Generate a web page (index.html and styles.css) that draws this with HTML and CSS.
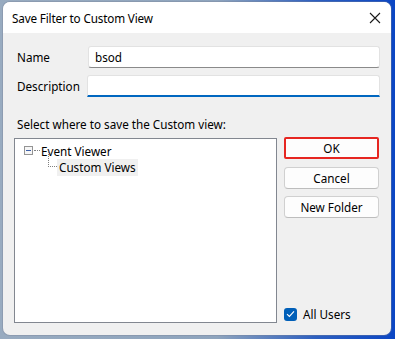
FILE: index.html
```html
<!DOCTYPE html>
<html>
<head>
<meta charset="utf-8">
<link rel="stylesheet" href="styles.css">
</head>
<body>
<div class="window">
  <div class="titlebar">
    <span class="title">Save Filter to Custom View</span>
    <svg class="close" width="12" height="12" viewBox="0 0 12 12"><path d="M1 1 L11 11 M11 1 L1 11" stroke="#1a1a1a" stroke-width="1.1" fill="none"/></svg>
  </div>
  <div class="content">
    <div class="fields">
      <label class="lbl">Name</label>
      <div class="input">bsod</div>
      <label class="lbl">Description</label>
      <div class="input focused"></div>
    </div>
    <div class="section-label">Select where to save the Custom view:</div>
    <div class="main">
      <div class="tree">
        <div class="node root">
          <span class="expander"><span class="minus"></span></span>
          <span class="hline"></span>
          <span class="node-text">Event Viewer</span>
        </div>
        <div class="node child">
          <span class="elbow"></span>
          <span class="node-text selected">Custom Views</span>
        </div>
      </div>
      <div class="side">
        <button class="btn ok">OK</button>
        <button class="btn">Cancel</button>
        <button class="btn">New Folder</button>
        <div class="spacer"></div>
        <div class="check">
          <span class="box"><svg width="9" height="8" viewBox="0 0 9 8"><path d="M1 4.2 L3.4 6.4 L8 1.4" stroke="#fff" stroke-width="1.1" fill="none"/></svg></span>
          <span>All Users</span>
        </div>
      </div>
    </div>
  </div>
</div>
</body>
</html>
```

FILE: styles.css
```css
* { box-sizing: border-box; }
html, body { margin: 0; padding: 0; }
body {
  width: 395px;
  height: 339px;
  overflow: hidden;
  background: linear-gradient(90deg, #98abc0 0%, #8ea4bd 55%, #2d5fc0 80%, #0b46c4 100%);
  font-family: "Segoe UI", "Noto Sans", "Open Sans", sans-serif;
  font-size: 11.7px;
  color: #000;
  padding: 2px 4px 0 3px;
}
.window {
  width: 388px;
  height: 333px;
  background: #f0f0f0;
  border-radius: 7px;
  overflow: hidden;
  display: flex;
  flex-direction: column;
  box-shadow: 0 0 0 1px rgba(120,130,150,0.35);
}
.titlebar {
  height: 31px;
  background: #fff;
  display: flex;
  align-items: center;
  justify-content: space-between;
  padding: 0 10px 0 9px;
}
.title { letter-spacing: -0.15px; }
.close { display: block; margin-top: 1px; }
.content {
  flex: 1;
  display: flex;
  flex-direction: column;
  padding: 13px 11px 12px 11px;
}
.fields {
  display: grid;
  grid-template-columns: 74px 1fr;
  row-gap: 7px;
  align-items: center;
}
.lbl { padding-left: 3px; }
.input {
  height: 22px;
  background: #fff;
  border: 1px solid #e2e2e2;
  border-bottom-color: #8a8a8a;
  border-radius: 3px;
  padding: 2px 6px;
  line-height: 16px;
}
.input.focused {
  border-bottom: 2px solid #0067c0;
  border-radius: 3px 3px 0 0;
  margin-left: -1px;
}
.section-label {
  margin-top: 17px;
  padding-left: 3px;
  height: 20px;
  line-height: 20px;
}
.main {
  flex: 1;
  display: flex;
  gap: 7px;
  margin-top: 4px;
}
.tree {
  width: 263px;
  background: #fff;
  border: 1px solid #828790;
  padding: 3px 0 0 9px;
}
.node { display: flex; align-items: center; height: 17px; }
.expander {
  width: 9px; height: 9px;
  border: 1px solid #949494;
  background: #f6f6f6;
  display: flex; align-items: center; justify-content: center;
}
.minus { width: 5px; height: 1px; background: #3c5fa8; }
.hline {
  width: 6px;
  border-top: 1px dotted #808080;
  margin-left: 1px;
}
.root .node-text { margin-left: 1px; }
.child { margin-left: 24px; height: 17px; }
.elbow {
  width: 9px; height: 15px;
  border-left: 1px dotted #808080;
  border-bottom: 1px dotted #808080;
  align-self: flex-start;
  margin-top: -7px;
}
.selected {
  background: #f0f0f0;
  padding: 0 2px;
  height: 17px;
  line-height: 17px;
}
.side {
  width: 95px;
  display: flex;
  flex-direction: column;
  gap: 7px;
}
.btn {
  font-family: inherit;
  font-size: 11.7px;
  height: 22px;
  background: #fdfdfd;
  border: 1px solid #d0d0d0;
  border-bottom-color: #bdbdbd;
  border-radius: 4px;
  padding: 0;
  color: #000;
}
.btn.ok {
  border: 2px solid #e62621;
  border-radius: 2px;
  height: 22px;
  margin-top: -1px;
  margin-bottom: 1px;
}
.spacer { flex: 1; }
.check {
  display: flex;
  align-items: center;
  gap: 6px;
  margin-bottom: 1px;
}
.box {
  width: 13px; height: 13px;
  background: #005fb8;
  border-radius: 3px;
  display: flex; align-items: center; justify-content: center;
}
```
